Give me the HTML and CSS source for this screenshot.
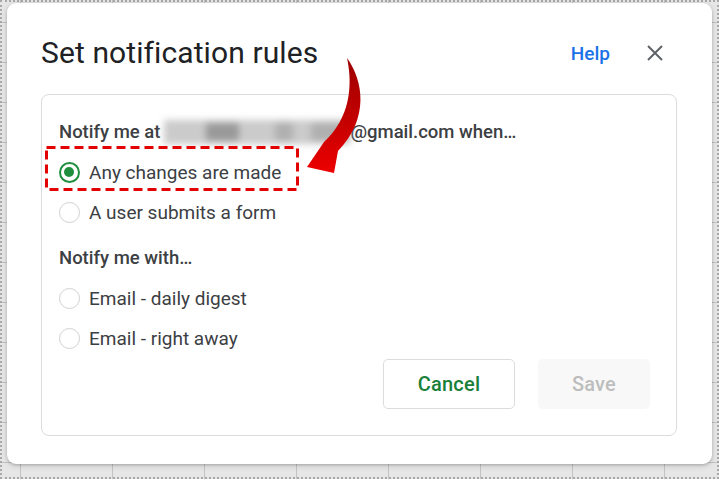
FILE: index.html
```html
<!DOCTYPE html>
<html>
<head>
<meta charset="utf-8">
<link rel="stylesheet" href="styles.css">
</head>
<body>
<div class="frame">
  <div class="dialog">
    <div class="header">
      <h1 class="title">Set notification rules</h1>
      <a class="help">Help</a>
      <svg class="close" width="16" height="16" viewBox="0 0 16 16"><path d="M1 1L15 15M15 1L1 15" stroke="#5f6368" stroke-width="2" fill="none"/></svg>
    </div>
    <div class="box">
      <div class="heading">Notify me at<span class="blur"><span class="b1"></span><span class="b2"></span><span class="b3"></span></span>@gmail.com when…</div>
      <div class="row"><span class="radio checked"></span><span>Any changes are made</span></div>
      <div class="row"><span class="radio"></span><span>A user submits a form</span></div>
      <div class="heading second">Notify me with…</div>
      <div class="row"><span class="radio"></span><span>Email - daily digest</span></div>
      <div class="row"><span class="radio"></span><span>Email - right away</span></div>
      <div class="actions">
        <button class="btn cancel">Cancel</button>
        <button class="btn save">Save</button>
      </div>
    </div>
  </div>
  <svg class="arrow" width="719" height="479" viewBox="0 0 719 479">
    <defs>
      <linearGradient id="g" x1="0" y1="0" x2="0" y2="1">
        <stop offset="0" stop-color="#9e0000"/>
        <stop offset="0.6" stop-color="#c80000"/>
        <stop offset="1" stop-color="#ee0000"/>
      </linearGradient>
    </defs>
    <rect x="46.5" y="147.5" width="251" height="42" fill="none" stroke="#e30000" stroke-width="3" stroke-dasharray="9 5"/>
    <path d="M347 58 C363 80 370 118 338 151 L334 173 L307 167 L324 142 C350 118 353 86 347 58 Z" fill="url(#g)"/>
  </svg>
</div>
</body>
</html>
```
FILE: styles.css
```css
* { box-sizing: border-box; }
html, body { margin: 0; padding: 0; }
body { width: 719px; height: 479px; overflow: hidden; font-family: Roboto, "Liberation Sans", sans-serif; }
.frame {
  position: relative;
  width: 719px;
  height: 479px;
  border: 2px dotted #a8a8a8;
  background-color: #e6e6e6;
  background-image:
    linear-gradient(to bottom, rgba(180,180,180,0.7) 1px, transparent 1px),
    linear-gradient(to right, rgba(180,180,180,0.7) 1px, transparent 1px);
  background-size: 100% 40px, 92px 100%;
  background-position: 0 20px, 18px 0;
  padding: 1px 0 0 5px;
}
.dialog {
  width: 705px;
  height: 461px;
  background: #fff;
  border-radius: 9px;
  box-shadow: 0 1px 3px rgba(0,0,0,0.2), 0 2px 6px rgba(0,0,0,0.12);
  padding: 30px 35px 0 34px;
}
.header { display: flex; align-items: center; height: 38px; }
.title {
  margin: 0;
  flex: 1;
  font-family: Roboto, "Liberation Sans", sans-serif;
  font-weight: 400;
  font-size: 30px;
  color: #202124;
  letter-spacing: 0.1px;
}
.help { color: #1a73e8; font-size: 19px; font-weight: 500; margin-right: 37px; margin-top: 2px; }
.close { margin-right: 14px; margin-top: 1px; }
.box {
  margin-top: 23px;
  width: 636px;
  height: 342px;
  border: 1px solid #dadce0;
  border-radius: 8px;
  padding: 17px 26px 0 17px;
}
.heading {
  height: 40px;
  display: flex;
  align-items: center;
  font-size: 18.5px;
  font-weight: 500;
  color: #3c4043;
}
.heading.second { margin-top: 6px; }
.blur {
  display: inline-flex;
  width: 186px;
  height: 24px;
  margin: 0 0 0 4px;
  background: #cbcbcb;
  filter: blur(3.5px);
  align-items: center;
}
.blur span { display: block; height: 18px; background: #b0b0b0; }
.b1 { width: 36px; margin-left: 42px; background: #999 !important; }
.b2 { width: 20px; margin-left: 36px; }
.b3 { width: 44px; margin-left: 18px; }
.row {
  height: 40px;
  display: flex;
  align-items: center;
  font-size: 19px;
  color: #3c4043;
}
.radio {
  width: 21px;
  height: 21px;
  border-radius: 50%;
  border: 1px solid #cfd1d4;
  margin-left: 0;
  margin-right: 9px;
  position: relative;
  flex: none;
}
.radio.checked { border: 2.5px solid #1e8e3e; }
.radio.checked::after {
  content: "";
  position: absolute;
  left: 3px; top: 3px;
  width: 10px; height: 10px;
  border-radius: 50%;
  background: #1e8e3e;
}
.actions { display: flex; justify-content: flex-end; gap: 23px; margin-top: 1px; }
.btn {
  height: 50px;
  border-radius: 5px;
  font-family: Roboto, "Liberation Sans", sans-serif;
  font-size: 20px;
  font-weight: 500;
  letter-spacing: 0.2px;
}
.cancel { width: 132px; background: #fff; border: 1px solid #dadce0; color: #188038; }
.save { width: 112px; background: #f8f8f8; border: none; color: #bdbdbd; }
.arrow { position: absolute; left: -2px; top: -2px; }
```
